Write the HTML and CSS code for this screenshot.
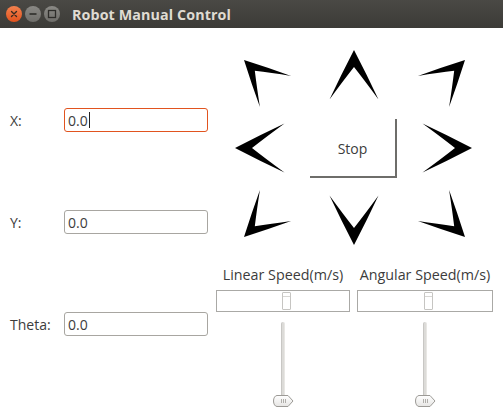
FILE: index.html
```html
<!DOCTYPE html>
<html>
<head>
<meta charset="utf-8">
<link rel="stylesheet" href="styles.css">
</head>
<body>
<div class="titlebar">
  <div class="winbtns">
    <span class="wb close"><svg width="16" height="16" viewBox="0 0 16 16"><path d="M5.5 5.5 L10.5 10.5 M10.5 5.5 L5.5 10.5" stroke="#3a2a20" stroke-width="1.4" stroke-linecap="round"/></svg></span>
    <span class="wb"><svg width="16" height="16" viewBox="0 0 16 16"><path d="M4.5 8 H11.5" stroke="#2e2d2a" stroke-width="1.6"/></svg></span>
    <span class="wb"><svg width="16" height="16" viewBox="0 0 16 16"><rect x="4.5" y="4.5" width="7" height="7" fill="none" stroke="#2e2d2a" stroke-width="1.3"/></svg></span>
  </div>
  <div class="title">Robot Manual Control</div>
</div>
<div class="main">
  <div class="left">
    <div class="row"><span class="lbl">X:</span><div class="field focus">0.0<span class="caret"></span></div></div>
    <div class="row"><span class="lbl">Y:</span><div class="field">0.0</div></div>
    <div class="row"><span class="lbl">Theta:</span><div class="field">0.0</div></div>
  </div>
  <div class="right">
    <div class="pad">
      <button class="arr"><svg viewBox="0 0 88 77" width="88" height="77"><use href="#chev" transform="translate(22 18) rotate(-45) scale(0.9)"/></svg></button>
      <button class="arr"><svg viewBox="0 0 87 77" width="87" height="77"><use href="#chev" transform="translate(44 8)"/></svg></button>
      <button class="arr"><svg viewBox="0 0 87 77" width="87" height="77"><use href="#chev" transform="translate(68 18) rotate(45) scale(0.9)"/></svg></button>
      <button class="arr"><svg viewBox="0 0 88 59" width="88" height="59"><use href="#chev" transform="translate(13 29) rotate(-90)"/></svg></button>
      <button class="stop">Stop</button>
      <button class="arr"><svg viewBox="0 0 87 59" width="87" height="59"><use href="#chev" transform="translate(75 29) rotate(90)"/></svg></button>
      <button class="arr"><svg viewBox="0 0 88 77" width="88" height="77"><use href="#chev" transform="translate(22 59) rotate(-135) scale(0.9)"/></svg></button>
      <button class="arr"><svg viewBox="0 0 87 77" width="87" height="77"><use href="#chev" transform="translate(44 67) rotate(180)"/></svg></button>
      <button class="arr"><svg viewBox="0 0 87 77" width="87" height="77"><use href="#chev" transform="translate(68 59) rotate(135) scale(0.9)"/></svg></button>
    </div>
    <div class="speeds">
      <div class="speed">
        <div class="slabel">Linear Speed(m/s)</div>
        <div class="hbox"><span class="hhandle"></span></div>
        <div class="vslider">
          <span class="groove"></span>
          <svg class="vhandle" width="21" height="12" viewBox="0 0 21 12"><use href="#knob"/></svg>
        </div>
      </div>
      <div class="speed">
        <div class="slabel">Angular Speed(m/s)</div>
        <div class="hbox"><span class="hhandle"></span></div>
        <div class="vslider">
          <span class="groove"></span>
          <svg class="vhandle" width="21" height="12" viewBox="0 0 21 12"><use href="#knob"/></svg>
        </div>
      </div>
    </div>
  </div>
</div>
<svg class="defs" width="0" height="0">
  <defs>
    <path id="chev" d="M0 0 Q13 25 24.5 49.5 Q11 31 0 17 Q-11 31 -24.5 49.5 Q-13 25 0 0 Z" fill="#000"/>
    <linearGradient id="kg" x1="0" y1="0" x2="0" y2="1"><stop offset="0" stop-color="#ffffff"/><stop offset="1" stop-color="#e6e5e3"/></linearGradient>
    <g id="knob">
      <path d="M4 0.5 H15 L20 6 L15 11.5 H4 A3.5 5.5 0 0 1 4 0.5 Z" fill="url(#kg)" stroke="#9c9a96" stroke-width="1"/>
      <path d="M8.5 4 V8 M10.5 4 V8 M12.5 4 V8" stroke="#b0aeaa" stroke-width="1"/>
    </g>
  </defs>
</svg>
</body>
</html>
```
FILE: styles.css
```css
* { box-sizing: border-box; }
html, body { margin: 0; padding: 0; }
body {
  width: 503px;
  height: 419px;
  overflow: hidden;
  background: #ffffff;
  font-family: "Open Sans", "Noto Sans", sans-serif;
  font-size: 14px;
  color: #3c3c3c;
}
.titlebar {
  height: 28px;
  background: linear-gradient(#4a4945, #3c3b37);
  display: flex;
  align-items: center;
  padding-left: 6px;
}
.winbtns { display: flex; gap: 3px; }
.wb {
  width: 16px; height: 16px; border-radius: 50%;
  background: linear-gradient(#8a8985, #6f6e6a);
  display: block;
}
.wb svg { display: block; }
.wb.close { background: linear-gradient(#f3824f, #e2521d); }
.title {
  margin-left: 12px;
  color: #dfdbd2;
  font-weight: 700;
  font-size: 14.3px;
  letter-spacing: 0.1px;
}
.main { display: flex; }
.left {
  width: 216px;
  padding-top: 80px;
  padding-left: 10px;
  display: flex;
  flex-direction: column;
  gap: 78px;
}
.row { display: flex; align-items: center; height: 24px; }
.lbl { width: 54px; }
.field {
  width: 144px; height: 24px;
  border: 1px solid #a8a6a1;
  border-radius: 3px;
  padding-left: 3px;
  display: flex; align-items: center;
  background: #fff;
  color: #3c3c3c;
}
.field.focus { border-color: #e1541f; }
.caret { display: inline-block; width: 1px; height: 16px; background: #222; margin-left: 1px; }
.right { width: 287px; }
.pad {
  margin-top: 14px;
  margin-left: 6px;
  display: grid;
  grid-template-columns: 88px 87px 87px;
  grid-template-rows: 77px 59px 77px;
}
.arr {
  border: 0; padding: 0; margin: 0; background: transparent;
  display: block; overflow: visible;
}
.arr svg { display: block; overflow: visible; }
.stop {
  border: 0; margin: 0; padding: 2px 0 0 0;
  background: #fff;
  border-right: 2px solid #6e6d6a;
  border-bottom: 2px solid #6e6d6a;
  font-family: inherit; font-size: 14px; color: #3c3c3c;
}
.defs { position: absolute; width: 0; height: 0; }
.speeds { display: flex; gap: 7px; margin-top: 11px; }
.speed { display: flex; flex-direction: column; align-items: center; }
.speed:first-child { width: 134px; }
.speed:last-child { width: 136px; }
.slabel { height: 18px; line-height: 18px; white-space: nowrap; font-size: 14.3px; }
.hbox {
  margin-top: 6px;
  width: 100%; height: 22px;
  border: 1px solid #aaa9a6;
  position: relative;
  display: flex; justify-content: center; align-items: center;
}
.hhandle {
  width: 9px; height: 18px;
  border: 1px solid #c6c5c2;
  border-radius: 1px;
  margin-left: 7px;
  background: linear-gradient(#fff 0, #fff 20%, #d8d7d4 20%, #d8d7d4 25%, #fff 25%);
}
.vslider {
  margin-top: 10px;
  height: 85px; width: 22px;
  display: flex; flex-direction: column; align-items: center;
}
.groove {
  width: 4px; height: 76px;
  background: #dcdbd8;
  border-left: 1px solid #c8c7c4;
  border-right: 1px solid #e8e7e4;
  border-radius: 2px 2px 0 0;
}
.vhandle { display: block; margin-top: -3px; margin-left: 1px; }
```
